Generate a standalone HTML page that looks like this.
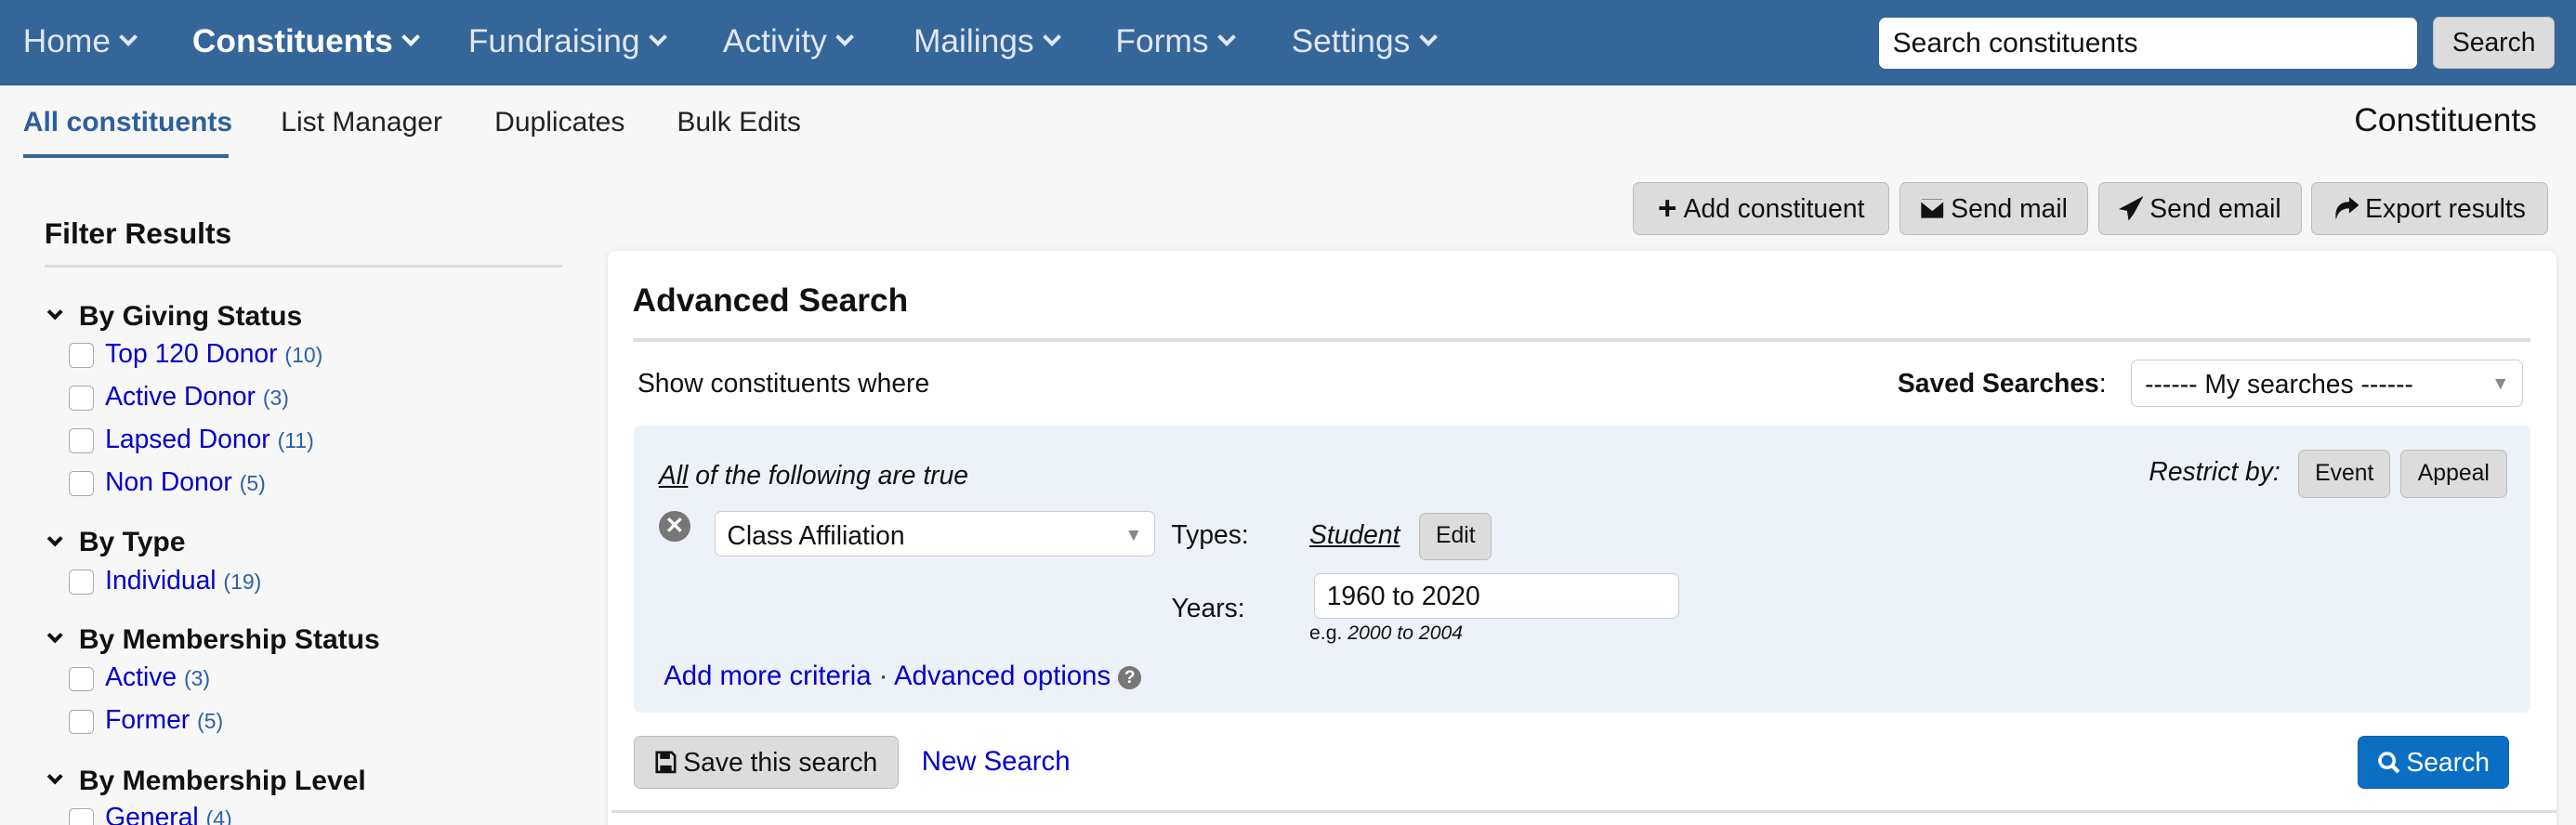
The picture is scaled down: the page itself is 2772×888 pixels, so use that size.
<!DOCTYPE html>
<html><head><meta charset="utf-8"><style>
*{box-sizing:border-box;margin:0;padding:0}
html,body{width:2772px;height:888px;overflow:hidden;background:#f7f7f7}
#w{zoom:1.7679;width:1568px;height:502px;position:relative;font-family:"Liberation Sans",sans-serif;color:#111}
.a{position:absolute;white-space:nowrap}
.nav{left:0;top:0;width:1568px;height:52px;background:#35669a}
.ni{top:14px;font-size:20px;color:#dfe7f0}
.chev{display:inline-block;width:8px;height:8px;border-right:2.5px solid currentColor;border-bottom:2.5px solid currentColor;transform:rotate(45deg);margin-left:7px;position:relative;top:-5px}
.btn{background:#dcdcdc;border:1px solid #bbb;border-radius:4px;font-size:16px;display:flex;align-items:center;justify-content:center;gap:4px;color:#111}
.h{font-weight:bold;font-size:17px}
.cb{width:15px;height:15px;border:1px solid #aaa;border-radius:3px;background:#fff}
.lk{color:#0000cc;font-size:16px}
.cnt{font-size:13px;color:#2d5fa8}
</style></head><body><div id="w">
<div class="a nav"></div>
<div class="a ni" style="left:14px">Home<span class="chev"></span></div>
<div class="a ni" style="left:117px;color:#fff;font-weight:bold">Constituents<span class="chev"></span></div>
<div class="a ni" style="left:285px">Fundraising<span class="chev"></span></div>
<div class="a ni" style="left:440px">Activity<span class="chev"></span></div>
<div class="a ni" style="left:556px">Mailings<span class="chev"></span></div>
<div class="a ni" style="left:679px">Forms<span class="chev"></span></div>
<div class="a ni" style="left:786px">Settings<span class="chev"></span></div>
<div class="a" style="left:1144px;top:11px;width:327px;height:31px;background:#fff;border-radius:4px;font-size:17px;padding:6px 8px">Search constituents</div>
<div class="a btn" style="left:1481px;top:10px;width:74px;height:32px">Search</div>

<div class="a" style="left:14px;top:65px;font-size:17px;font-weight:bold;color:#2d6099">All constituents</div>
<div class="a" style="left:14px;top:94px;width:125px;height:2px;background:#35669a"></div>
<div class="a" style="left:171px;top:65px;font-size:17px;color:#222">List Manager</div>
<div class="a" style="left:301px;top:65px;font-size:17px;color:#222">Duplicates</div>
<div class="a" style="left:412px;top:65px;font-size:17px;color:#222">Bulk Edits</div>
<div class="a" style="left:1433px;top:62px;font-size:20px">Constituents</div>

<div class="a" style="left:27px;top:132px;font-size:18px;font-weight:bold">Filter Results</div>
<div class="a" style="left:27px;top:161px;width:315px;height:2px;background:#dcdde2"></div>
<div class="a h" style="left:27px;top:183px"><span class="chev" style="margin:0 11px 0 3px;top:-4px;width:7px;height:7px"></span>By Giving Status</div>
<div class="a cb" style="left:42px;top:209px"></div><div class="a lk" style="left:64px;top:206px">Top 120 Donor <span class="cnt">(10)</span></div>
<div class="a cb" style="left:42px;top:235px"></div><div class="a lk" style="left:64px;top:232px">Active Donor <span class="cnt">(3)</span></div>
<div class="a cb" style="left:42px;top:261px"></div><div class="a lk" style="left:64px;top:258px">Lapsed Donor <span class="cnt">(11)</span></div>
<div class="a cb" style="left:42px;top:287px"></div><div class="a lk" style="left:64px;top:284px">Non Donor <span class="cnt">(5)</span></div>
<div class="a h" style="left:27px;top:321px"><span class="chev" style="margin:0 11px 0 3px;top:-4px;width:7px;height:7px"></span>By Type</div>
<div class="a cb" style="left:42px;top:347px"></div><div class="a lk" style="left:64px;top:344px">Individual <span class="cnt">(19)</span></div>
<div class="a h" style="left:27px;top:380px"><span class="chev" style="margin:0 11px 0 3px;top:-4px;width:7px;height:7px"></span>By Membership Status</div>
<div class="a cb" style="left:42px;top:406px"></div><div class="a lk" style="left:64px;top:403px">Active <span class="cnt">(3)</span></div>
<div class="a cb" style="left:42px;top:432px"></div><div class="a lk" style="left:64px;top:429px">Former <span class="cnt">(5)</span></div>
<div class="a h" style="left:27px;top:466px"><span class="chev" style="margin:0 11px 0 3px;top:-4px;width:7px;height:7px"></span>By Membership Level</div>
<div class="a cb" style="left:42px;top:492px"></div><div class="a lk" style="left:64px;top:488px">General <span class="cnt">(4)</span></div>

<div class="a btn" style="left:994px;top:111px;width:156px;height:32px"><b style="font-size:20px">+</b>Add constituent</div>
<div class="a btn" style="left:1156px;top:111px;width:115px;height:32px"><svg width="15" height="13" viewBox="0 0 15 13"><path d="M0 0h15v13H0z M0 1l7.5 6L15 1" fill="#111" stroke="#dcdcdc" stroke-width="1.5"/></svg>Send mail</div>
<div class="a btn" style="left:1277px;top:111px;width:124px;height:32px"><svg width="15" height="15" viewBox="0 0 15 15"><path d="M15 0L0 8l5 1 1 6 3-4z" fill="#111"/></svg>Send email</div>
<div class="a btn" style="left:1407px;top:111px;width:144px;height:32px"><svg width="15" height="14" viewBox="0 0 15 14"><path d="M9 0l6 5-6 5V7C5 7 2 9 1 14 0 7 3 3 9 3z" fill="#111"/></svg>Export results</div>

<div class="a" style="left:370px;top:153px;width:1186px;height:360px;background:#fff;border-radius:5px;box-shadow:0 0 4px rgba(0,0,0,.1)"></div>
<div class="a" style="left:385px;top:172px;font-size:20px;font-weight:bold">Advanced Search</div>
<div class="a" style="left:385px;top:206px;width:1155px;height:2px;background:#dcdde2"></div>
<div class="a" style="left:388px;top:224px;font-size:16px">Show constituents where</div>
<div class="a" style="left:1155px;top:224px;font-size:16px"><b>Saved Searches</b>:</div>
<div class="a" style="left:1297px;top:219px;width:239px;height:29px;border:1px solid #ccc;border-radius:4px;font-size:16px;padding:5px 8px;background:#fff">------ My searches ------<span style="position:absolute;right:8px;color:#888;font-size:11px;top:8px">▼</span></div>

<div class="a" style="left:386px;top:259px;width:1154px;height:175px;background:#edf1f8;border-radius:4px"></div>
<div class="a" style="left:401px;top:280px;font-size:16px;font-style:italic"><u>All</u> of the following are true</div>
<div class="a" style="left:1308px;top:278px;font-size:16px;font-style:italic">Restrict by:</div>
<div class="a btn" style="left:1399px;top:274px;width:56px;height:29px;font-size:14px">Event</div>
<div class="a btn" style="left:1461px;top:274px;width:65px;height:29px;font-size:14px">Appeal</div>
<div class="a" style="left:401px;top:311px;width:19px;height:19px;border-radius:50%;background:#777;color:#fff;font-size:14px;font-weight:bold;text-align:center;line-height:19px">✕</div>
<div class="a" style="left:435px;top:311px;width:268px;height:28px;background:#fff;border:1px solid #ccc;border-radius:4px;font-size:16px;padding:5px 7px">Class Affiliation<span style="position:absolute;right:7px;color:#888;font-size:11px;top:8px">▼</span></div>
<div class="a" style="left:713px;top:316px;font-size:16px">Types:</div>
<div class="a" style="left:797px;top:316px;font-size:16px;font-style:italic;text-decoration:underline">Student</div>
<div class="a btn" style="left:864px;top:312px;width:44px;height:29px;font-size:14px">Edit</div>
<div class="a" style="left:713px;top:361px;font-size:16px">Years:</div>
<div class="a" style="left:800px;top:349px;width:222px;height:28px;background:#fff;border:1px solid #ccc;border-radius:4px;font-size:16px;padding:4px 7px">1960 to 2020</div>
<div class="a" style="left:797px;top:379px;font-size:12px">e.g. <i>2000 to 2004</i></div>
<div class="a" style="left:404px;top:402px;font-size:16.6px;color:#0000cc">Add more criteria <span style="color:#333">·</span> Advanced options <span style="display:inline-block;width:14px;height:14px;border-radius:50%;background:#777;color:#fff;font-size:11px;font-weight:bold;text-align:center;line-height:14px;vertical-align:1px">?</span></div>

<div class="a btn" style="left:386px;top:448px;width:161px;height:32px"><svg width="13" height="14" viewBox="0 0 13 14"><path d="M1 1h9l2 2v10H1z" fill="none" stroke="#111" stroke-width="1.5"/><path d="M3 1h6v4H3z M3 9h7v4H3z" fill="#111"/></svg>Save this search</div>
<div class="a" style="left:561px;top:454px;font-size:16.6px;color:#0000cc">New Search</div>
<div class="a btn" style="left:1435px;top:448px;width:92px;height:32px;background:#0a6fc2;border-color:#0862ad;color:#fff"><svg width="14" height="14" viewBox="0 0 14 14"><circle cx="6" cy="6" r="4.3" fill="none" stroke="#fff" stroke-width="2"/><path d="M9 9l4 4" stroke="#fff" stroke-width="2.4"/></svg>Search</div>
<div class="a" style="left:372px;top:493px;width:1184px;height:2px;background:#dcdde2"></div>
</div></body></html>
